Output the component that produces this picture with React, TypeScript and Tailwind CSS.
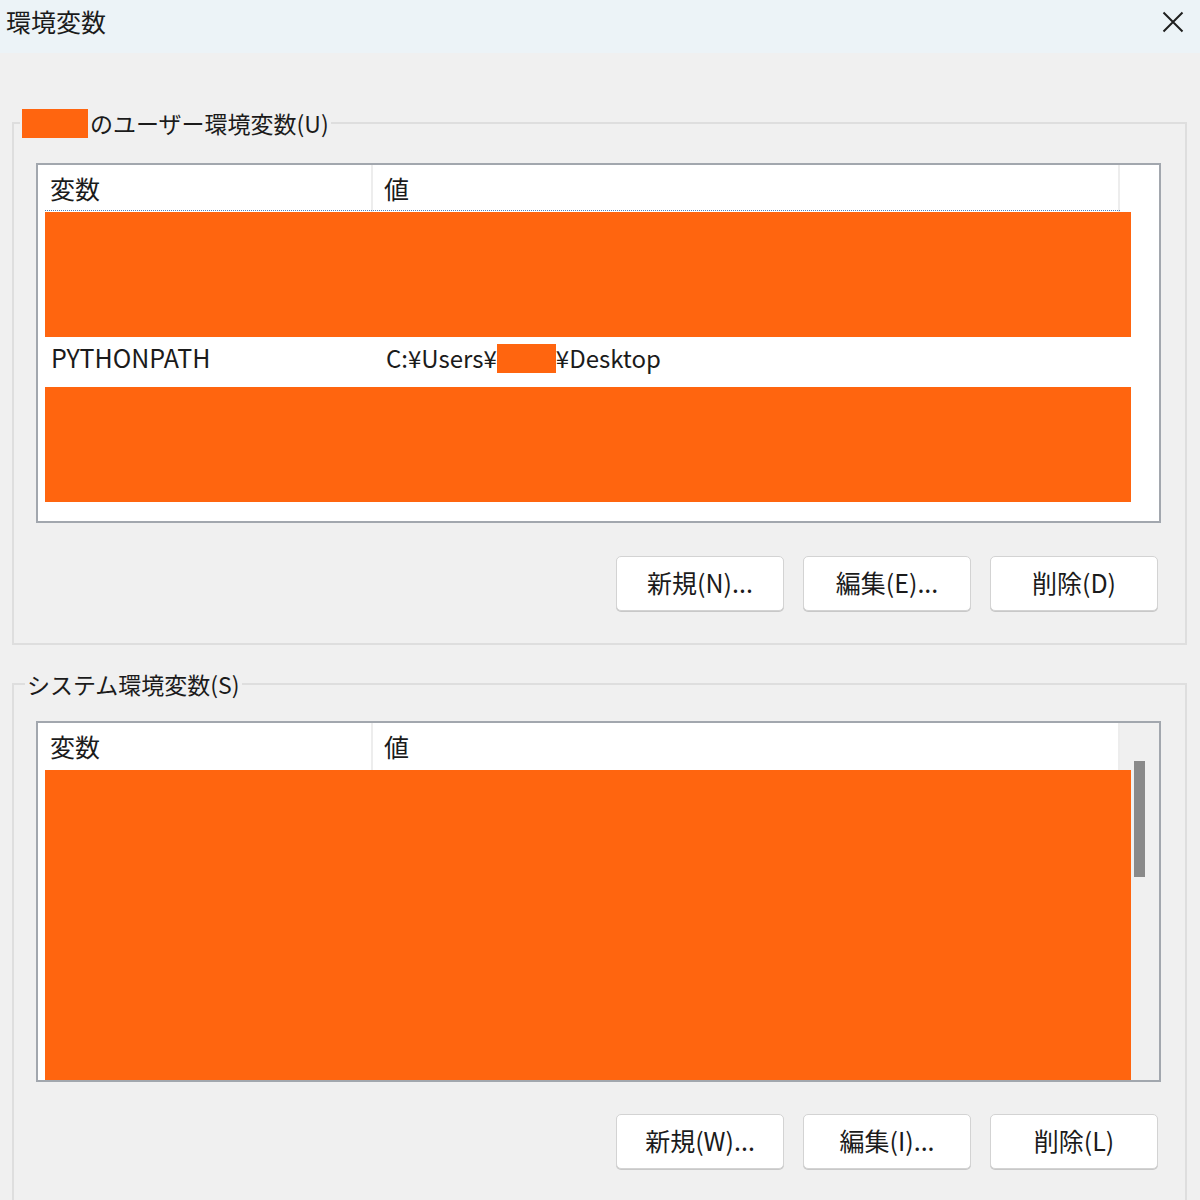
import React from "react";

const font = { fontFamily: '"Noto Sans CJK JP", "Noto Sans", sans-serif' };

function Btn({ label }: { label: string }) {
  return (
    <button className="w-[168px] h-[55px] bg-white border border-[#d3d3d3] rounded-[5px] text-[25px] text-[#1b1b1b] shadow-[0_1px_0_#c8c8c8] flex items-center justify-center pb-[2px]">
      {label}
    </button>
  );
}

function Header({ scroll }: { scroll?: boolean }) {
  return (
    <div className="flex h-[47px] shrink-0 relative z-10">
      <div className="w-[335px] border-r-2 border-[#ededed] bg-white pl-[12px] flex items-center text-[25px]">変数</div>
      <div className="w-[747px] border-r-2 border-[#ededed] bg-white pl-[11px] flex items-center text-[25px]">値</div>
      <div className={scroll ? "flex-1" : "flex-1 bg-white"}></div>
    </div>
  );
}

export default function App() {
  return (
    <div className="w-[1200px] h-[1200px] bg-[#f0f0f0] overflow-hidden text-[#1b1b1b]" style={font}>
      {/* title bar */}
      <div className="h-[53px] bg-[#ecf3f7] flex items-center justify-between">
        <div className="pl-[6px] text-[25px] leading-none pb-[10px]">環境変数</div>
        <div className="pr-[16px] pb-[10px]">
          <svg width="22" height="22" viewBox="0 0 22 22">
            <path d="M1.5 1.5 L20.5 20.5 M20.5 1.5 L1.5 20.5" stroke="#1f1f1f" strokeWidth="2" fill="none" />
          </svg>
        </div>
      </div>

      <div className="pl-[12px] pr-[13px] pt-[55px]">
        {/* user group */}
        <fieldset className="border-2 border-[#dedede] pl-[22px] pr-[24px] pb-[32px] m-0">
          <legend className="-ml-[16px] px-[2px] h-[30px] flex items-center text-[23px] leading-[30px]">
            <span className="inline-block w-[66px] h-[29px] bg-[#ff650f] mr-[2px]"></span>
            <span>のユーザー環境変数(U)</span>
          </legend>
          <div className="mt-[25px] h-[360px] border-2 border-[#a2a7ae] bg-white flex flex-col">
            <Header />
            <div className="relative z-20">
              <div className="absolute left-[7px] top-[-2px] w-[1075px] border-t border-dotted border-[#4f7fb5]"></div>
            </div>
            <div className="ml-[7px] w-[1086px] h-[125px] bg-[#ff650f]"></div>
            <div className="ml-[7px] h-[50px] flex items-center pb-[8px]">
              <div className="w-[341px] pl-[6px] text-[25px]">PYTHONPATH</div>
              <div className="flex items-center text-[24px]">
                <span>C:¥Users¥</span>
                <span className="inline-block w-[59px] h-[29px] bg-[#ff650f]"></span>
                <span>¥Desktop</span>
              </div>
            </div>
            <div className="ml-[7px] w-[1086px] h-[115px] bg-[#ff650f]"></div>
          </div>
          <div className="mt-[33px] flex justify-end gap-[19px] pr-[3px]">
            <Btn label="新規(N)..." />
            <Btn label="編集(E)..." />
            <Btn label="削除(D)" />
          </div>
        </fieldset>

        {/* system group */}
        <fieldset className="mt-[24px] border-2 border-[#dedede] pl-[22px] pr-[24px] pb-[32px] m-0">
          <legend className="-ml-[11px] px-[2px] h-[30px] flex items-center text-[23px] leading-[30px]">
            システム環境変数(S)
          </legend>
          <div className="mt-[22px] h-[361px] border-2 border-[#a2a7ae] bg-white flex flex-col relative">
            <div className="absolute right-0 top-0 bottom-0 w-[39px] bg-[#f0f0f0] z-0">
              <div className="ml-[14px] mt-[38px] w-[11px] h-[116px] bg-[#8a8a8a]"></div>
            </div>
            <Header scroll />
            <div className="relative z-10 ml-[7px] w-[1086px] h-[310px] bg-[#ff650f]"></div>
          </div>
          <div className="mt-[32px] flex justify-end gap-[19px] pr-[3px]">
            <Btn label="新規(W)..." />
            <Btn label="編集(I)..." />
            <Btn label="削除(L)" />
          </div>
        </fieldset>
      </div>
    </div>
  );
}
